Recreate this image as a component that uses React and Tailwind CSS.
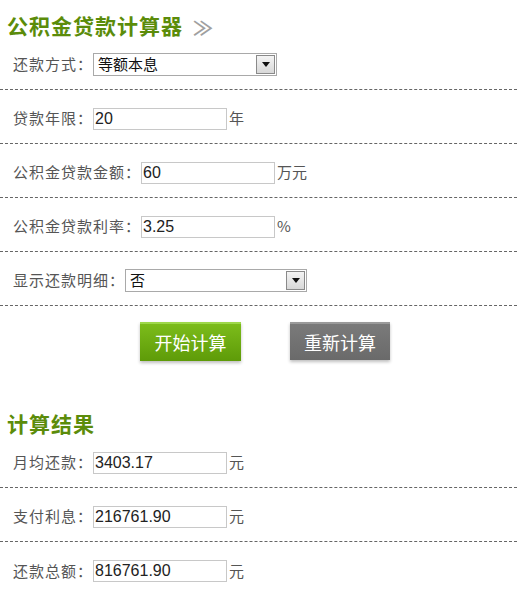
import React from 'react';

const font = { fontFamily: '"Microsoft YaHei", "Noto Sans CJK SC", sans-serif' };

const Caret = () => (
    <span className="flex h-[19px] w-[19px] items-center justify-center border border-[#8a8a8a] bg-gradient-to-b from-[#f4f4f4] to-[#d8d8d8]">
        <svg width="8" height="5" viewBox="0 0 8 5"><path d="M0 0h8L4 5z" fill="#111" /></svg>
    </span>
);

const Select = ({ value, width }) => (
    <div className={`flex h-[23px] items-center justify-between border border-[#a9a9a9] bg-white pl-[4px] pr-[1px] ${width}`}>
        <span className="text-[15px] text-[#111]">{value}</span>
        <Caret />
    </div>
);

const Input = ({ value, width = 'w-[134px]' }) => (
    <div className={`flex h-[22px] items-center border border-[#c8c8c8] bg-white px-[1px] ${width}`}>
        <span className="text-[16px] text-[#222]" style={{ fontFamily: '"Liberation Sans", Arial, sans-serif' }}>{value}</span>
    </div>
);

const Row = ({ label, children, unit, last }) => (
    <div className={`flex h-[54px] items-center pl-[13px] pt-[4px] ${last ? '' : 'border-b border-dashed border-[#666]'}`}>
        <span className="text-[15px] tracking-[1px] text-[#555]">{label}</span>
        {children}
        {unit && <span className="ml-[2px] text-[15px] text-[#555]">{unit}</span>}
    </div>
);

const App = () => {
    return (
        <div className="w-[520px] bg-white pr-[3px]" style={font}>
            <div className="flex h-[44px] items-end pb-[3px] pl-[7px]">
                <h2 className="text-[21px] font-bold tracking-[1px] text-[#5b8c0a]">公积金贷款计算器</h2>
                <span className="ml-[10px] mb-[3px] text-[20px] font-bold leading-none text-[#a0a0a0]">≫</span>
            </div>
            <div className="-mt-[8px]">
                <Row label="还款方式：">
                    <Select value="等额本息" width="w-[184px]" />
                </Row>
                <Row label="贷款年限：" unit="年">
                    <Input value="20" />
                </Row>
                <Row label="公积金贷款金额：" unit="万元">
                    <Input value="60" />
                </Row>
                <Row label="公积金贷款利率：" unit="%">
                    <Input value="3.25" />
                </Row>
                <Row label="显示还款明细：">
                    <Select value="否" width="w-[182px]" />
                </Row>
            </div>
            <div className="flex gap-[49px] pl-[140px] pt-[16px]">
                <button className="h-[39px] w-[101px] border-t-2 border-[#9ed84a] bg-gradient-to-b from-[#7cbc1a] to-[#5e9b08] text-[18px] text-white shadow-[0_2px_3px_rgba(0,0,0,0.25)]">
                    开始计算
                </button>
                <button className="h-[38px] w-[100px] border-t-2 border-[#9a9a9a] bg-gradient-to-b from-[#7a7a7a] to-[#6a6a6a] text-[18px] text-white shadow-[0_2px_3px_rgba(0,0,0,0.25)]">
                    重新计算
                </button>
            </div>
            <h2 className="pl-[7px] pt-[49px] text-[21px] font-bold leading-[26px] tracking-[1px] text-[#5b8c0a]">计算结果</h2>
            <div className="-mt-[2px]">
                <Row label="月均还款：" unit="元">
                    <Input value="3403.17" />
                </Row>
                <Row label="支付利息：" unit="元">
                    <Input value="216761.90" />
                </Row>
                <Row label="还款总额：" unit="元" last>
                    <Input value="816761.90" />
                </Row>
            </div>
        </div>
    );
};

export default App;
